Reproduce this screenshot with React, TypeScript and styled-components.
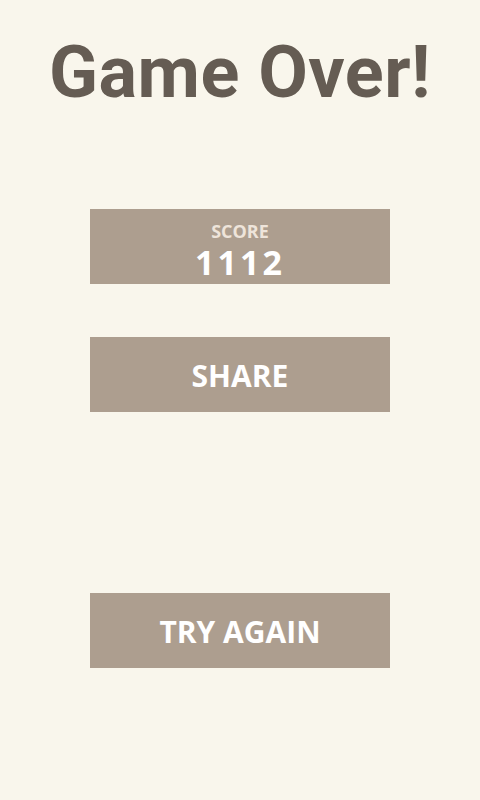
import React from "react";
import styled, { createGlobalStyle } from "styled-components";

const GlobalStyle = createGlobalStyle`
  html, body {
    margin: 0;
    padding: 0;
    background-color: #f9f6ec;
    font-family: "Open Sans", "DejaVu Sans", sans-serif;
  }
`;

const Screen = styled.div`
  width: 480px;
  height: 800px;
  display: flex;
  flex-direction: column;
  align-items: center;
  background-color: #f9f6ec;
`;

const Title = styled.h1`
  margin: 33px 0 0 0;
  font-family: Roboto, "Open Sans", sans-serif;
  font-size: 72px;
  line-height: 80px;
  font-weight: 700;
  color: #655c53;
  letter-spacing: 0.5px;
`;

const Panel = styled.div<{ $top: number }>`
  margin-top: ${(p) => p.$top}px;
  width: 300px;
  height: 75px;
  box-sizing: border-box;
  background-color: #ad9e8f;
  display: flex;
  flex-direction: column;
  align-items: center;
  justify-content: center;
  color: #ffffff;
  font-weight: 700;
`;

const ScorePanel = styled(Panel)`
  justify-content: flex-start;
  padding-top: 12px;
`;

const ScoreLabel = styled.div`
  font-size: 18px;
  line-height: 20px;
  color: #eee4da;
`;

const ScoreValue = styled.div`
  margin-top: 3px;
  font-size: 34px;
  line-height: 36px;
  letter-spacing: 3px;
`;

const ButtonText = styled.div`
  font-size: 30px;
  line-height: 34px;
  margin-top: 2px;
`;

export default function App() {
  return (
    <>
      <GlobalStyle />
      <Screen>
        <Title>Game Over!</Title>
        <ScorePanel $top={96}>
          <ScoreLabel>SCORE</ScoreLabel>
          <ScoreValue>1112</ScoreValue>
        </ScorePanel>
        <Panel $top={53}>
          <ButtonText>SHARE</ButtonText>
        </Panel>
        <Panel $top={181}>
          <ButtonText>TRY AGAIN</ButtonText>
        </Panel>
      </Screen>
    </>
  );
}
